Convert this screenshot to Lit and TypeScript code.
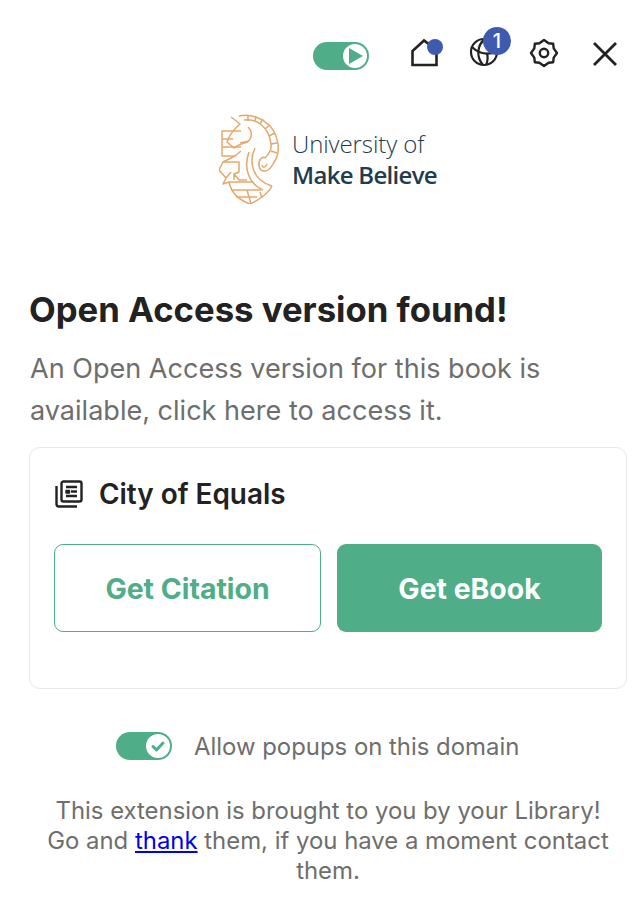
import { LitElement, html, css } from "lit";
import { customElement } from "lit/decorators.js";

@customElement("app-root")
export class AppRoot extends LitElement {
  static styles = css`
    :host { display: block; width: 644px; height: 908px; background: #fff; font-family: Inter, "Liberation Sans", sans-serif; color: #222; box-sizing: border-box; }
    .top { display: flex; align-items: flex-start; height: 114px; padding: 27px 0 0 313px; box-sizing: border-box; position: relative; }
    .toggle { position: relative; width: 56px; height: 28px; border-radius: 14px; background: #4fae88; flex: none; }
    .toggle .knob { position: absolute; right: 2px; top: 2px; width: 24px; height: 24px; border-radius: 50%; background: #fff; display: flex; align-items: center; justify-content: center; }
    .t1 { margin-top: 15px; }
    .ic { flex: none; position: relative; display: block; }
    .home { margin: 10px 0 0 40px; width: 32px; height: 32px; }
    .globe { margin: 0 0 0 27px; width: 46px; height: 46px; }
    .gear { margin: 10px 0 0 14px; width: 32px; height: 32px; }
    .close { margin: 13px 0 0 31px; width: 28px; height: 28px; }
    .logo { display: flex; justify-content: flex-start; height: 96px; padding-left: 219px; align-items: flex-start; }
    .brand { margin: 0 0 0 11px; padding-top: 14px; color: #1f3d50; font-family: "Open Sans", sans-serif; font-size: 24px; line-height: 31px; letter-spacing: -0.1px; }
    .brand .u { font-weight: 300; }
    .brand .m { font-weight: 600; letter-spacing: -0.7px; }
    .main { padding: 0 17px 0 29px; margin-top: 77px; }
    h1 { margin: 0; font-size: 34.7px; line-height: 44px; font-weight: 700; color: #222; }
    .lead { margin: 17px 0 0 1px; font-size: 27.05px; line-height: 42px; color: #6e6e6e; }
    .card { margin-top: 15px; height: 242px; box-sizing: border-box; border: 1px solid #e8e8e8; border-radius: 11px; padding: 24px; }
    .card-head { display: flex; align-items: center; gap: 15px; height: 44px; }
    .card-head span { font-size: 27.9px; font-weight: 600; color: #222; }
    .btns { display: flex; gap: 16px; margin-top: 28px; }
    .btn { height: 88px; box-sizing: border-box; border-radius: 9px; display: flex; align-items: center; justify-content: center; font-size: 28.4px; font-weight: 700; }
    .outline { width: 267px; border: 1px solid #4fae88; color: #4fae88; background: #fff; }
    .solid { width: 265px; background: #4fae88; color: #fff; }
    .allow { display: flex; align-items: center; gap: 22px; padding-left: 116px; margin: 43px 0 0 -29px; height: 28px; }
    .allow span { font-size: 23.9px; color: #6e6e6e; }
    .foot { margin: 36px 0 0; padding: 0 30px 0 42px; font-size: 23.9px; line-height: 30px; color: #6e6e6e; text-align: center; }
    .foot a { color: #0000ee; text-decoration: underline; }
    .badge { position: absolute; left: 15px; top: 0; width: 28px; height: 28px; border-radius: 50%; background: #3f5bb0; color: #fff; font-size: 20px; font-weight: 500; display: flex; align-items: center; justify-content: center; }
    .dot { position: absolute; left: 18px; top: 2px; width: 16px; height: 16px; border-radius: 50%; background: #3f5bb0; }
    .globe svg { position: absolute; left: 0; top: 9px; }
  `;

  render() {
    return html`
      <div class="top">
        <div class="toggle t1"><div class="knob">
          <svg width="22" height="22" viewBox="0 0 22 22"><path d="M5 3 L19 11 L5 19 Z" fill="#4fae88"/></svg>
        </div></div>
        <div class="ic home">
          <svg width="32" height="32" viewBox="0 0 32 32" fill="none" stroke="#222" stroke-width="2.6"><path d="M3.5 28 V14 L15 3.5 L27.5 13 V28 Z"/></svg>
          <div class="dot"></div>
        </div>
        <div class="ic globe">
          <svg width="32" height="32" viewBox="0 0 32 32" fill="none" stroke="#222" stroke-width="2.2">
            <circle cx="16" cy="16" r="13"/>
            <path d="M17 3 C9 9 8 21 15 29"/><path d="M4 11 C11 18 20 19 29 16"/><path d="M19 17 C20 21 20 25 18 29"/>
          </svg>
          <div class="badge">1</div>
        </div>
        <div class="ic gear">
          <svg width="32" height="32" viewBox="0 0 32 32" fill="none" stroke="#222" stroke-width="2.4" stroke-linejoin="round">
            <path d="M16 3 L20.6 6.3 L25.2 6.8 L25.7 11.4 L29 16 L25.7 20.6 L25.2 25.2 L20.6 25.7 L16 29 L11.4 25.7 L6.8 25.2 L6.3 20.6 L3 16 L6.3 11.4 L6.8 6.8 L11.4 6.3 Z"/>
            <circle cx="16" cy="16" r="4.2"/>
          </svg>
        </div>
        <div class="ic close">
          <svg width="28" height="28" viewBox="0 0 28 28" stroke="#222" stroke-width="2.8"><path d="M3 3 L25 25 M25 3 L3 25"/></svg>
        </div>
      </div>
      <div class="logo">
        <svg width="62" height="90" viewBox="0 0 62 90" fill="none" stroke="#e5a86c" stroke-width="1.5" stroke-linejoin="round">
          <path d="M20 2 C36 -1 56 8 59 30 C60 40 58 44 54 50"/>
          <path d="M25 6 C36 4 50 12 52 30 C53 36 50 40 46 44"/>
          <path d="M29 2 L29 7 M37 2 L36 7 M44 5 L41 10 M51 11 L46 15 M56 19 L50 22 M58 29 L52 30 M58 39 L52 37"/>
          <path d="M54 50 C50 58 42 60 40 52 C39 46 43 42 46 44"/>
          <path d="M48 50 C46 54 44 54 43 51"/>
          <path d="M12 3 L21 10 C14 16 10 22 8 28 L15 34 C19 30 24 30 28 28 C33 25 34 18 29 13"/>
          <path d="M30 27 L21 29"/>
          <path d="M22 17 H3 V42 H16 L22 37"/><path d="M3 25 H14 M3 33 H22"/>
          <path d="M16 42 L4 48 L0 56 L7 64 L4 70 L10 68 C12 78 20 86 31 90 C44 84 50 78 53 72"/>
          <path d="M4 48 H20 V58 L15 60 L20 66 H28 M7 64 L12 58 M15 60 V66"/>
          <path d="M10 68 H34 M12 76 H42 M17 83 H38 M28 76 L32 90 M41 78 L43 84"/>
          <path d="M36 34 C30 46 32 66 53 72"/>
          <path d="M30 38 C24 54 30 70 44 76"/>
        </svg>
        <div class="brand"><div class="u">University of</div><div class="m">Make Believe</div></div>
      </div>
      <div class="main">
        <h1>Open Access version found!</h1>
        <p class="lead">An Open Access version for this book is available, click here to access it.</p>
        <div class="card">
          <div class="card-head">
            <svg width="30" height="30" viewBox="0 0 30 30" fill="none" stroke="#222" stroke-width="2.4" stroke-linejoin="round">
              <rect x="7.5" y="2.5" width="20" height="20" rx="2"/>
              <path d="M2.5 7 V25 A2.5 2.5 0 0 0 5 27.5 H23"/>
              <path d="M12 8 H23 M17 12.5 H23 M12 17 H23"/><path d="M12 11.5 H15.5 V14 H12 Z" fill="#222" stroke-width="1.4"/>
            </svg>
            <span>City of Equals</span>
          </div>
          <div class="btns">
            <div class="btn outline">Get Citation</div>
            <div class="btn solid">Get eBook</div>
          </div>
        </div>
        <div class="allow">
          <div class="toggle"><div class="knob">
            <svg width="18" height="18" viewBox="0 0 18 18" fill="none" stroke="#4fae88" stroke-width="3" stroke-linecap="round" stroke-linejoin="round"><path d="M4 9.5 L7.5 13 L14 6"/></svg>
          </div></div>
          <span>Allow popups on this domain</span>
        </div>
      </div>
      <p class="foot">This extension is brought to you by your Library!<br>Go and <a href="#">thank</a> them, if you have a moment contact them.</p>
    `;
  }
}
